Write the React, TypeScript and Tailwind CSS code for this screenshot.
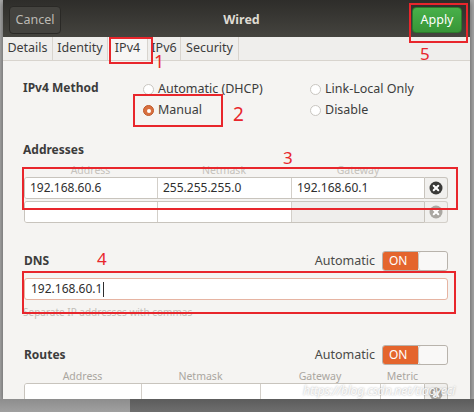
import React from 'react';

const font = { fontFamily: '"Noto Sans", "Open Sans", sans-serif' };

const tabs = [
  { label: 'Details', w: 'w-[50px]' },
  { label: 'Identity', w: 'w-[55px]' },
  { label: 'IPv4', w: 'w-[40px]' },
  { label: 'IPv6', w: 'w-[33px]' },
  { label: 'Security', w: 'w-[58px]' },
];

const ClearIcon: React.FC<{ faded?: boolean }> = ({ faded }) => (
  <svg width="14" height="14" viewBox="0 0 14 14">
    <circle cx="7" cy="7" r="6.5" fill={faded ? '#aaa7a2' : '#3a3a38'} />
    <path d="M4.7 4.7l4.6 4.6M9.3 4.7l-4.6 4.6" stroke="#ffffff" strokeWidth="2" strokeLinecap="round" />
  </svg>
);

const Radio: React.FC<{ checked?: boolean; label: string }> = ({ checked, label }) => (
  <div className="flex items-center gap-[4px] h-[13px]">
    {checked ? (
      <span className="w-[11px] h-[11px] rounded-full bg-[#d9703f] border border-[#bf5a2b] flex items-center justify-center">
        <span className="w-[4px] h-[4px] rounded-full bg-white" />
      </span>
    ) : (
      <span className="w-[11px] h-[11px] rounded-full bg-white border border-[#c9c6c1]" />
    )}
    <span className="text-[12.5px] text-[#3c3c3c] leading-none">{label}</span>
  </div>
);

const Switch: React.FC = () => (
  <div className="flex items-center gap-[7px]">
    <span className="text-[12.5px] text-[#4a4a48]">Automatic</span>
    <div className="flex w-[66px] h-[20px] rounded-[3px] border border-[#b8b3ac] overflow-hidden">
      <div className="w-[35px] bg-[#e4652d] text-white text-[12px] leading-[18px] pl-[6px]">ON</div>
      <div className="flex-1 bg-[#f9f8f7] rounded-[3px] border-l border-[#c9c4bd]" />
    </div>
  </div>
);

const Cell: React.FC<{ w: string; text?: string; gray?: boolean; last?: boolean }> = ({ w, text, gray, last }) => (
  <div
    className={`${w} h-full flex items-center pl-[5px] text-[12px] text-[#2e2e2e] ${gray ? 'bg-[#efeeec]' : 'bg-white'} ${last ? '' : 'border-r border-[#d3cfc9]'}`}
  >
    {text}
  </div>
);

export default function App() {
  return (
    <div className="w-[474px] h-[412px] overflow-hidden bg-[#a9a9a9] relative flex flex-col" style={font}>
      <div className="ml-[3px] w-[467px] h-[399px] shrink-0 overflow-hidden bg-[#f5f4f2] flex flex-col shadow-[0_2px_6px_rgba(0,0,0,0.5)]">
        {/* Header bar */}
        <div className="h-[37px] shrink-0 bg-gradient-to-b from-[#2e2d2a] to-[#45443f] flex items-center justify-between px-[6px] pt-[3px]">
          <div className="h-[28px] w-[52px] rounded-[4px] bg-[#44433f] border border-[#2a2926] flex items-center justify-center text-[12.5px] text-[#bdbab4]">
            Cancel
          </div>
          <div className="text-[12.5px] font-bold text-[#dfdbd2] ml-[10px]">Wired</div>
          <div className="h-[26px] w-[50px] rounded-[4px] bg-gradient-to-b from-[#48b04a] to-[#379637] border border-[#2b7a2b] flex items-center justify-center text-[12.5px] text-white mr-[2px]">
            Apply
          </div>
        </div>

        {/* Tabs */}
        <div className="h-[24px] shrink-0 bg-[#efeeec] border-b border-[#d8d4ce] flex items-stretch text-[12.5px] text-[#3c3c3c]">
          {tabs.map((t) => (
            <div
              key={t.label}
              className={`${t.w} flex items-center justify-center border-r border-[#d8d4ce] ${t.label === 'IPv4' ? 'bg-[#f7f6f5]' : ''}`}
            >
              {t.label}
            </div>
          ))}
        </div>

        {/* Content */}
        <div className="flex-1 pl-[20px] pr-[22px] pt-[19px]">
          <div className="flex">
            <div className="w-[120px] text-[12px] font-bold text-[#3c3c3c] leading-[16px]">IPv4 Method</div>
            <div className="grid grid-cols-[167px_auto] gap-y-[8px] pt-[3px]">
              <Radio label="Automatic (DHCP)" />
              <Radio label="Link-Local Only" />
              <Radio checked label="Manual" />
              <Radio label="Disable" />
            </div>
          </div>

          <div className="mt-[25px] text-[12px] font-bold text-[#3c3c3c] leading-[16px]">Addresses</div>
          <div className="mt-[5px] pl-[1px] flex text-[10.5px] text-[#c6c2bc] leading-[14px]">
            <div className="w-[133px] text-center">Address</div>
            <div className="w-[134px] text-center">Netmask</div>
            <div className="w-[134px] text-center">Gateway</div>
          </div>
          <div className="pl-[1px] flex flex-col gap-[2px]">
            <div className="flex h-[22px]">
              <div className="flex flex-1 h-full border border-[#c8c4bd] rounded-l-[3px] overflow-hidden">
                <Cell w="w-[133px]" text="192.168.60.6" />
                <Cell w="w-[134px]" text="255.255.255.0" />
                <Cell w="flex-1" text="192.168.60.1" last />
              </div>
              <div className="w-[23px] h-full bg-[#f1f0ee] border border-l-0 border-[#c8c4bd] rounded-r-[3px] flex items-center justify-center">
                <ClearIcon />
              </div>
            </div>
            <div className="flex h-[22px]">
              <div className="flex flex-1 h-full border border-[#c8c4bd] rounded-l-[3px] overflow-hidden">
                <Cell w="w-[133px]" />
                <Cell w="w-[134px]" />
                <Cell w="flex-1" gray last />
              </div>
              <div className="w-[23px] h-full bg-[#f1f0ee] border border-l-0 border-[#d3cfc9] rounded-r-[3px] flex items-center justify-center">
                <ClearIcon faded />
              </div>
            </div>
          </div>

          <div className="mt-[28px] pl-[1px] flex items-center justify-between">
            <div className="text-[12px] font-bold text-[#3c3c3c]">DNS</div>
            <Switch />
          </div>
          <div className="mt-[7px] ml-[1px] h-[22px] bg-white border border-[#e6b4a2] rounded-[3px] flex items-center pl-[6px] text-[12px] text-[#2e2e2e]">
            192.168.60.1<span className="inline-block w-px h-[15px] bg-[#2e2e2e] ml-[1px]" />
          </div>
          <div className="mt-[4px] text-[10px] leading-[16px] text-[#c2beb8]">Separate IP addresses with commas</div>

          <div className="mt-[25px] pl-[1px] flex items-center justify-between">
            <div className="text-[12px] font-bold text-[#3c3c3c]">Routes</div>
            <Switch />
          </div>
          <div className="mt-[4px] pl-[1px] flex text-[10.5px] text-[#aaa6a0] leading-[14px]">
            <div className="w-[117px] text-center">Address</div>
            <div className="w-[119px] text-center">Netmask</div>
            <div className="w-[120px] text-center">Gateway</div>
            <div className="w-[45px] text-center">Metric</div>
          </div>
          <div className="pl-[1px] flex h-[22px]">
            <div className="flex flex-1 h-full border border-[#c8c4bd] rounded-l-[3px] overflow-hidden">
              <Cell w="w-[117px]" />
              <Cell w="w-[119px]" />
              <Cell w="w-[120px]" />
              <Cell w="flex-1" last />
            </div>
            <div className="w-[23px] h-full bg-[#f1f0ee] border border-l-0 border-[#c8c4bd] rounded-r-[3px] flex items-start pt-[3px] justify-center">
              <ClearIcon faded />
            </div>
          </div>
        </div>
      </div>

      {/* Desktop below the dialog */}
      <div className="flex-1 flex">
        <div className="w-[130px] bg-gradient-to-b from-[#8d8d8d] to-[#a0a0a0]" />
        <div className="flex-1 bg-gradient-to-b from-[#5c5c5c] to-[#6e6e6e]" />
      </div>

      {/* Watermark */}
      <div className="absolute left-[303px] top-[382px] text-[12.5px] text-white/90 italic tracking-tight [text-shadow:0_0_2px_rgba(0,0,0,0.35)]">
        https://blog.csdn.net/tiaoyeci
      </div>

      {/* Red annotations */}
      <div className="absolute left-[109px] top-[37px] w-[44px] h-[27px] border-2 border-[#e8262c]" />
      <div className="absolute left-[154px] top-[52px] text-[18px] leading-none text-[#e8262c]">1</div>
      <div className="absolute left-[133px] top-[94px] w-[90px] h-[33px] border-2 border-[#e8262c]" />
      <div className="absolute left-[233px] top-[105px] text-[19px] leading-none text-[#e8262c]">2</div>
      <div className="absolute left-[22px] top-[167px] w-[436px] h-[43px] border-2 border-[#e8262c]" />
      <div className="absolute left-[283px] top-[149px] text-[17px] leading-none text-[#e8262c]">3</div>
      <div className="absolute left-[22px] top-[271px] w-[434px] h-[43px] border-2 border-[#e8262c]" />
      <div className="absolute left-[97px] top-[250px] text-[17px] leading-none text-[#e8262c]">4</div>
      <div className="absolute left-[409px] top-[3px] w-[59px] h-[40px] border-2 border-[#e8262c]" />
      <div className="absolute left-[420px] top-[45px] text-[17px] leading-none text-[#e8262c]">5</div>
    </div>
  );
}
